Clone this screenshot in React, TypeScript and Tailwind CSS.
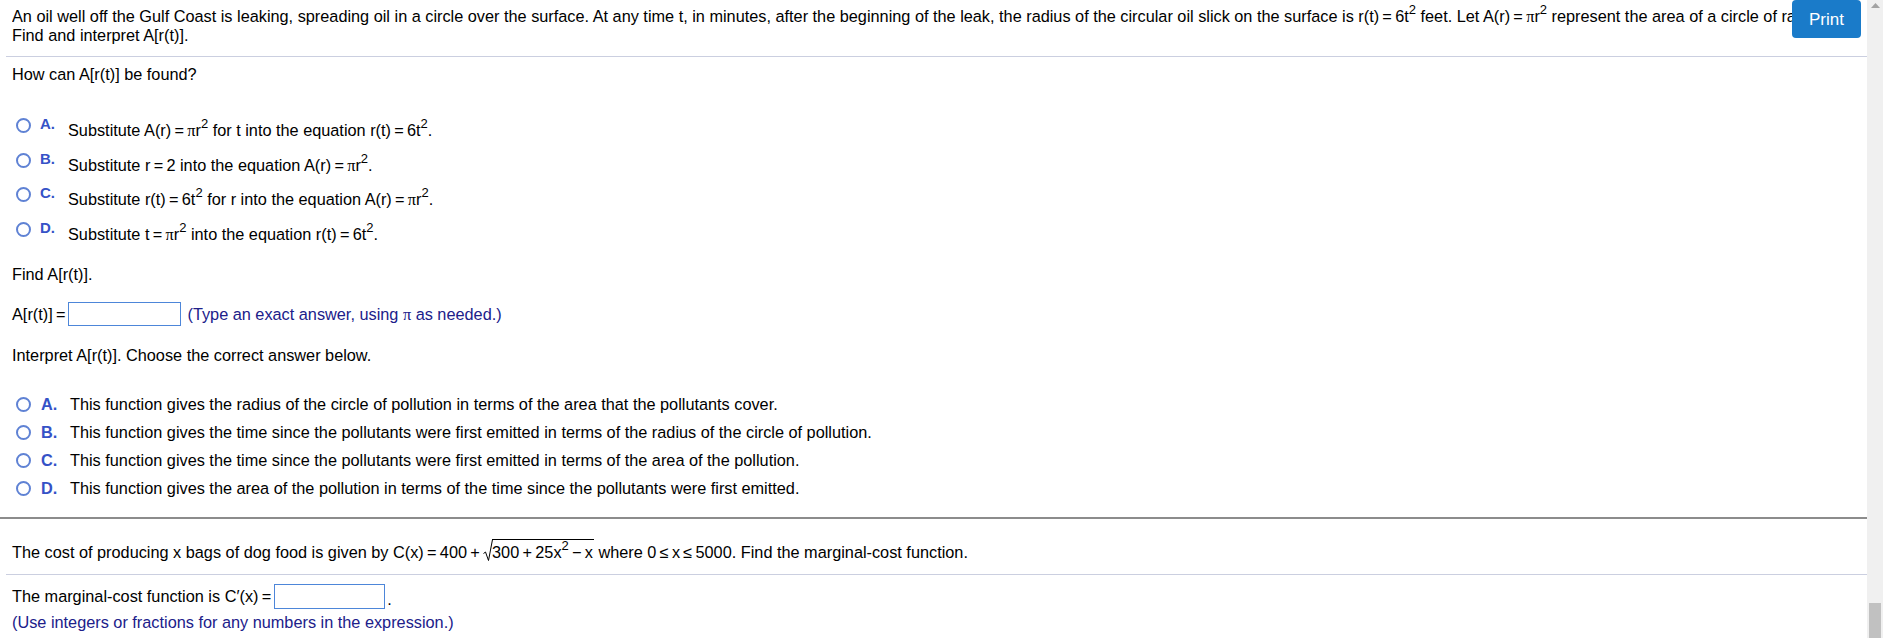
import type { ReactNode } from "react";

const T = "\u2009";

const Sup = ({ children }: { children: ReactNode }) => (
  <sup className="-top-[8px] text-[13px]">{children}</sup>
);

const Pi = () => <span className="font-['Liberation_Serif',serif]">π</span>;

const Radio = ({ className }: { className: string }) => (
  <span
    className={`h-[15px] w-[15px] shrink-0 rounded-full border-2 border-[#5f82d4] ${className}`}
  />
);

const howOptions: { key: string; body: ReactNode }[] = [
  {
    key: "A.",
    body: (
      <>
        Substitute A(r){T}={T}
        <Pi />r<Sup>2</Sup> for t into the equation r(t){T}={T}6t<Sup>2</Sup>.
      </>
    ),
  },
  {
    key: "B.",
    body: (
      <>
        Substitute r{T}={T}2 into the equation A(r){T}={T}
        <Pi />r<Sup>2</Sup>.
      </>
    ),
  },
  {
    key: "C.",
    body: (
      <>
        Substitute r(t){T}={T}6t<Sup>2</Sup> for r into the equation A(r){T}={T}
        <Pi />r<Sup>2</Sup>.
      </>
    ),
  },
  {
    key: "D.",
    body: (
      <>
        Substitute t{T}={T}
        <Pi />r<Sup>2</Sup> into the equation r(t){T}={T}6t<Sup>2</Sup>.
      </>
    ),
  },
];

const interpretOptions = [
  { key: "A.", body: "This function gives the radius of the circle of pollution in terms of the area that the pollutants cover." },
  { key: "B.", body: "This function gives the time since the pollutants were first emitted in terms of the radius of the circle of pollution." },
  { key: "C.", body: "This function gives the time since the pollutants were first emitted in terms of the area of the pollution." },
  { key: "D.", body: "This function gives the area of the pollution in terms of the time since the pollutants were first emitted." },
];

export default function App() {
  return (
    <div className="flex h-screen w-full overflow-hidden bg-white font-['Liberation_Sans',Arial,sans-serif] text-[16.3px] leading-[19px] text-black">
      <div className="relative min-w-0 flex-1">
        <button className="absolute right-[6px] top-0 z-10 h-[38px] w-[69px] rounded-[4px] bg-[#1a7bc9] text-[17px] text-white">
          Print
        </button>

        {/* first question */}
        <div className="pl-[6px]">
          <div className="pb-[11px] pl-[6px] pt-[7px]">
            <p className="mr-[75px] overflow-x-clip whitespace-nowrap">
              An oil well off the Gulf Coast is leaking, spreading oil in a circle over the surface. At any time t, in
              minutes, after the beginning of the leak, the radius of the circular oil slick on the surface is r(t)
              {T}={T}6t<Sup>2</Sup> feet. Let A(r){T}={T}
              <Pi />r<Sup>2</Sup> represent the area of a circle of radius r.
            </p>
            <p>Find and interpret A[r(t)].</p>
          </div>
          <div className="h-px bg-[#cbcfe0]" />

          <div className="pl-[6px]">
            <p className="mt-[8px]">How can A[r(t)] be found?</p>

            <div className="mt-[32px]">
              {howOptions.map((o) => (
                <div key={o.key} className="flex h-[34.5px] items-start">
                  <Radio className="ml-[4px] mt-[2px]" />
                  <span className="ml-[9px] w-[28px] shrink-0 text-[15px] font-bold leading-[15px] text-[#3552c7]">
                    {o.key}
                  </span>
                  <span className="whitespace-nowrap pt-[5px]">{o.body}</span>
                </div>
              ))}
            </div>

            <p className="mt-[11px]">Find A[r(t)].</p>

            <div className="mt-[18px] flex h-[24px] items-center">
              <span>A[r(t)]{T}=</span>
              <span className="ml-[3px] h-[24px] w-[113px] border border-[#4d86d9] bg-white" />
              <span className="ml-[6px] text-[#20208a]">
                (Type an exact answer, using <Pi /> as needed.)
              </span>
            </div>

            <p className="mt-[20px]">Interpret A[r(t)]. Choose the correct answer below.</p>

            <div className="mt-[30px] flex flex-col gap-[9px]">
              {interpretOptions.map((o) => (
                <div key={o.key} className="flex items-start">
                  <Radio className="ml-[4px] mt-[2px]" />
                  <span className="ml-[10px] w-[29px] shrink-0 font-bold text-[#3552c7]">{o.key}</span>
                  <span className="whitespace-nowrap">{o.body}</span>
                </div>
              ))}
            </div>
          </div>
        </div>

        <div className="mt-[19px] h-[2px] bg-[#8c8c8c]" />

        {/* second question */}
        <div className="pl-[6px]">
          <p className="mt-[20px] whitespace-nowrap pl-[6px]">
            The cost of producing x bags of dog food is given by C(x){T}={T}400{T}+{T}
            <span className="relative inline-block pl-[9px]">
              <svg className="absolute left-0 top-0 h-[23px] w-[10px]" viewBox="0 0 10 23">
                <path d="M0.5 14.5 L2.5 13 L5.5 21.5 L9.5 0.5" stroke="#000" strokeWidth="1" fill="none" />
              </svg>
              <span className="inline-block border-t border-black pr-[1px] pt-[3px]">
                300{T}+{T}25x<Sup>2</Sup>
                {T}−{T}x
              </span>
            </span>{" "}
            where 0{T}≤{T}x{T}≤{T}5000. Find the marginal-cost function.
          </p>
          <div className="mt-[12px] h-px bg-[#cbcfe0]" />

          <div className="pl-[6px]">
            <div className="mt-[9px] flex h-[25px] items-center">
              <span>The marginal-cost function is C′(x){T}=</span>
              <span className="ml-[3px] h-[25px] w-[111px] border border-[#4d86d9] bg-white" />
              <span className="self-end pl-[2px] leading-[19px]">.</span>
            </div>
            <p className="mt-[4px] text-[#20208a]">(Use integers or fractions for any numbers in the expression.)</p>
          </div>
        </div>
      </div>

      {/* scrollbar */}
      <div className="flex w-[16px] shrink-0 flex-col bg-[#f0f0f0]">
        <div className="flex justify-center pt-[3px]">
          <svg width="9" height="5" viewBox="0 0 9 5">
            <path d="M0 5 L4.5 0 L9 5 Z" fill="#a3a3a3" />
          </svg>
        </div>
        <div className="flex-1" />
        <div className="mx-[2px] h-[35px] bg-[#c1c1c1]" />
      </div>
    </div>
  );
}
